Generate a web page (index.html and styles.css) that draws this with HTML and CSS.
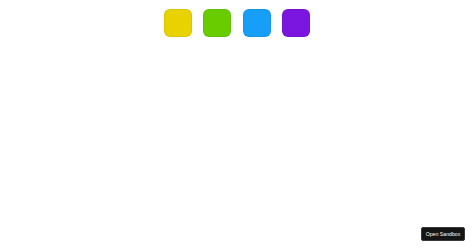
FILE: index.html
```html
<!DOCTYPE html>
<html>
<head>
<meta charset="utf-8">
<link rel="stylesheet" href="styles.css">
</head>
<body>
<div class="row">
  <div class="tile yellow"></div>
  <div class="tile green"></div>
  <div class="tile blue"></div>
  <div class="tile purple"></div>
</div>
<a class="open-btn">Open Sandbox</a>
</body>
</html>
```
FILE: styles.css
```css
html, body {
  margin: 0;
  padding: 0;
  background: #ffffff;
  width: 474px;
  height: 248px;
  overflow: hidden;
  font-family: "Liberation Sans", Arial, sans-serif;
}
.row {
  display: flex;
  justify-content: center;
  gap: 11.33px;
  padding-top: 9px;
}
.tile {
  width: 28px;
  height: 28px;
  border-radius: 6px;
  box-sizing: border-box;
  border: 1px solid rgba(0, 0, 0, 0.06);
}
.yellow { background: #e8d200; }
.green { background: #68cc00; }
.blue { background: #169ef9; }
.purple { background: #7a16e0; }
.open-btn {
  position: fixed;
  right: 9px;
  bottom: 7px;
  width: 44px;
  height: 14px;
  box-sizing: border-box;
  background: #151515;
  border: 1px solid #3a3a3a;
  border-radius: 2px;
  color: #ffffff;
  font-size: 5.2px;
  line-height: 12px;
  text-align: center;
  white-space: nowrap;
}
```
